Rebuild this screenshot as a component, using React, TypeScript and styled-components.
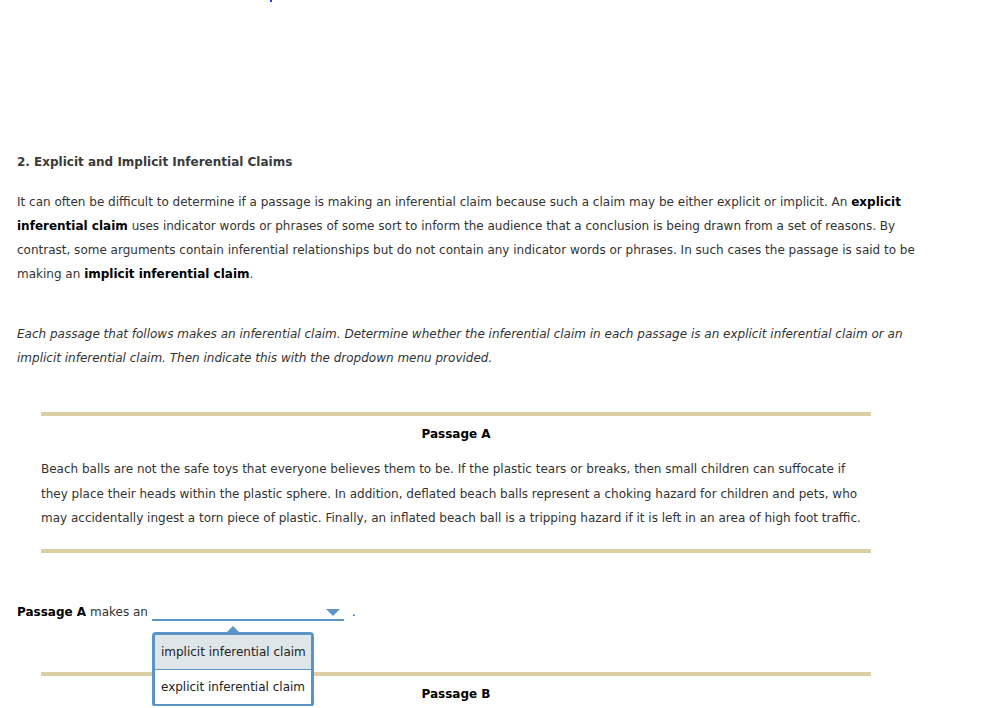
import styled, { createGlobalStyle } from 'styled-components';

const Global = createGlobalStyle`
  html, body {
    margin: 0;
    padding: 0;
    background: #fff;
  }
  body {
    font-family: "DejaVu Sans", Verdana, sans-serif;
    font-size: 12px;
    color: #333;
  }
`;

const Page = styled.div`
  position: relative;
  padding: 150px 17px 0;
  line-height: 24px;
`;

const Speck = styled.span`
  position: absolute;
  top: 0;
  left: 270px;
  width: 2px;
  height: 2px;
  background: #2b3cf0;
`;

const Title = styled.h2`
  margin: 0;
  font-size: 12px;
  font-weight: bold;
  color: #3a3a3a;
  line-height: 24px;
`;

const Para = styled.p<{ $gap: number; $italic?: boolean }>`
  margin: ${(p) => p.$gap}px 0 0;
  font-style: ${(p) => (p.$italic ? 'italic' : 'normal')};
  width: 920px;

  strong {
    color: #000;
  }
`;

const Passage = styled.section<{ $gap: number }>`
  margin: ${(p) => p.$gap}px 0 0 24px;
  width: 830px;
  border-top: 4px solid #dbcfa3;
  padding-top: 6px;
`;

const PassageBody = styled.div`
  border-bottom: 4px solid #dbcfa3;
  padding-bottom: 18px;
`;

const PassageHead = styled.div`
  text-align: center;
  font-weight: bold;
  color: #000;
  line-height: 24px;
`;

const PassageText = styled.p`
  margin: 11px 0 0;
  line-height: 24.5px;
`;

const AnswerRow = styled.div`
  margin-top: 47px;
  display: flex;
  align-items: flex-start;
  line-height: 24px;

  strong {
    color: #000;
  }
`;

const Select = styled.span`
  position: relative;
  display: inline-block;
  width: 192px;
  height: 19px;
  margin: 0 8px 0 4px;
  border-bottom: 2px solid #5b95c8;
`;

const Arrow = styled.span`
  position: absolute;
  right: 4px;
  top: 9px;
  width: 0;
  height: 0;
  border-left: 7px solid transparent;
  border-right: 7px solid transparent;
  border-top: 7px solid #5b95c8;
`;

const Menu = styled.ul`
  position: absolute;
  z-index: 2;
  top: 32px;
  left: 0;
  width: 156px;
  margin: 0;
  padding: 0;
  list-style: none;
  background: #fff;
  border: 3px solid #5b95c8;
  border-radius: 4px;

  &::before {
    content: '';
    position: absolute;
    top: -9px;
    left: 72px;
    border-left: 6px solid transparent;
    border-right: 6px solid transparent;
    border-bottom: 6px solid #5b95c8;
  }
`;

const Option = styled.li<{ $active?: boolean }>`
  height: 34px;
  line-height: 34px;
  padding: 0 6px;
  white-space: nowrap;
  color: #222;
  background: ${(p) => (p.$active ? '#dfe6e9' : '#fff')};

  & + & {
    border-top: 1px solid #5b95c8;
  }
`;

export default function App() {
  return (
    <>
      <Global />
      <Page>
        <Speck />
        <Title>2. Explicit and Implicit Inferential Claims</Title>
        <Para $gap={16}>
          It can often be difficult to determine if a passage is making an inferential claim because
          such a claim may be either explicit or implicit. An <strong>explicit inferential claim</strong>{' '}
          uses indicator words or phrases of some sort to inform the audience that a conclusion is
          being drawn from a set of reasons. By contrast, some arguments contain inferential
          relationships but do not contain any indicator words or phrases. In such cases the passage
          is said to be making an <strong>implicit inferential claim</strong>.
        </Para>
        <Para $gap={36} $italic>
          Each passage that follows makes an inferential claim. Determine whether the inferential
          claim in each passage is an explicit inferential claim or an implicit inferential claim.
          Then indicate this with the dropdown menu provided.
        </Para>

        <Passage $gap={42}>
          <PassageBody>
            <PassageHead>Passage A</PassageHead>
            <PassageText>
              Beach balls are not the safe toys that everyone believes them to be. If the plastic
              tears or breaks, then small children can suffocate if they place their heads within
              the plastic sphere. In addition, deflated beach balls represent a choking hazard for
              children and pets, who may accidentally ingest a torn piece of plastic. Finally, an
              inflated beach ball is a tripping hazard if it is left in an area of high foot traffic.
            </PassageText>
          </PassageBody>
        </Passage>

        <AnswerRow>
          <span>
            <strong>Passage A</strong> makes an
          </span>
          <Select>
            <Arrow />
            <Menu>
              <Option $active>implicit inferential claim</Option>
              <Option>explicit inferential claim</Option>
            </Menu>
          </Select>
          <span>.</span>
        </AnswerRow>

        <Passage $gap={48}>
          <PassageHead>Passage B</PassageHead>
        </Passage>
      </Page>
    </>
  );
}
